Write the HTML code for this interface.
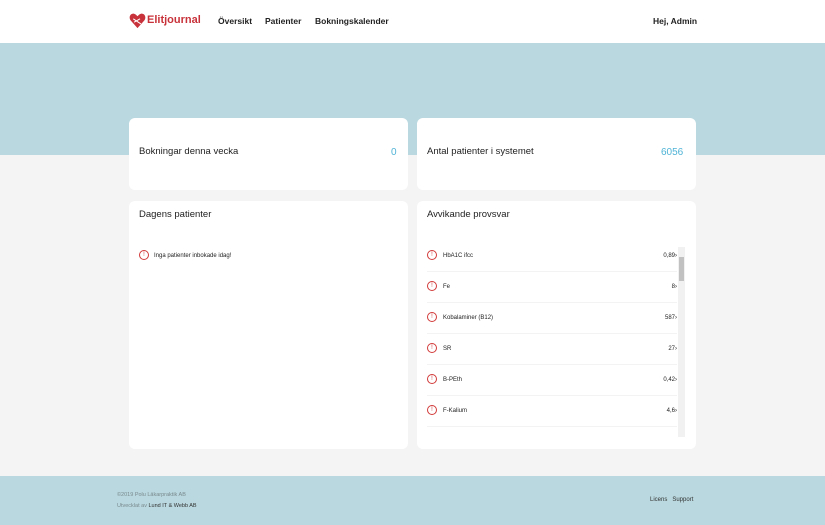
<!DOCTYPE html>
<html><head><style>
*{margin:0;padding:0;box-sizing:border-box}
body{width:825px;height:525px;overflow:hidden;background:#f4f4f4;font-family:"Liberation Sans",sans-serif;color:#222;position:relative}
.hdr{position:absolute;left:0;top:0;width:825px;height:43px;background:#fff}
.band{position:absolute;left:0;top:43px;width:825px;height:112px;background:#b9d8df}
.foot{position:absolute;left:0;top:476px;width:825px;height:49px;background:#b9d8df}
.card{position:absolute;background:#fff;border-radius:6px}
.t{position:absolute;font-size:10px}
.row{position:absolute;left:10px;width:250px;height:31px;border-bottom:1px solid #f3f3f3;font-size:6px}
.row span{top:12px}
.ic{position:absolute;left:0;top:9px;width:10px;height:10px;border:1px solid #d23a3a;border-radius:50%;color:#d23a3a;font-size:6px;text-align:center;line-height:8px}
</style></head><body>
<div class="hdr">
<svg style="position:absolute;left:129px;top:12px" width="17" height="17" viewBox="0 0 20 20"><path d="M10 19 L2 10 C-1 6 2 1 6 2 C8 2.5 9 4 10 5 C11 4 12 2.5 14 2 C18 1 21 6 18 10 Z" fill="#c8323a"/><path d="M5 8 L14 14 M6 12 L13 8" stroke="#fff" stroke-width="1.3"/></svg>
<div class="t" style="left:147px;top:14px;font-size:11px;font-weight:bold;color:#c8323a">Elitjournal</div>
<div class="t" style="left:218px;top:16px;font-size:8.5px;font-weight:bold">Översikt</div>
<div class="t" style="left:265px;top:16px;font-size:8.5px;font-weight:bold">Patienter</div>
<div class="t" style="left:315px;top:16px;font-size:8.5px;font-weight:bold">Bokningskalender</div>
<div class="t" style="left:653px;top:16px;font-size:8.5px;font-weight:bold">Hej, Admin</div>
</div>
<div class="band"></div>
<div class="card" style="left:129px;top:118px;width:279px;height:72px">
<div class="t" style="left:10px;top:28px;font-size:9.5px">Bokningar denna vecka</div>
<div class="t" style="left:262px;top:29px;color:#4fb3d6">0</div></div>
<div class="card" style="left:417px;top:118px;width:279px;height:72px">
<div class="t" style="left:10px;top:28px;font-size:9.5px">Antal patienter i systemet</div>
<div class="t" style="left:244px;top:29px;color:#4fb3d6">6056</div></div>
<div class="card" style="left:129px;top:201px;width:279px;height:248px">
<div class="t" style="left:10px;top:8px;font-size:9.5px">Dagens patienter</div>
<div class="row" style="top:40px;border:none"><div class="ic">!</div><span style="position:absolute;left:15px">Inga patienter inbokade idag!</span></div>
</div>
<div class="card" style="left:417px;top:201px;width:279px;height:248px">
<div class="t" style="left:10px;top:8px;font-size:9.5px">Avvikande provsvar</div>
<div class="row" style="top:40px"><div class="ic">!</div><span style="position:absolute;left:16px">HbA1C ifcc</span><span style="position:absolute;right:0">0,89›</span></div>
<div class="row" style="top:71px"><div class="ic">!</div><span style="position:absolute;left:16px">Fe</span><span style="position:absolute;right:0">8›</span></div>
<div class="row" style="top:102px"><div class="ic">!</div><span style="position:absolute;left:16px">Kobalaminer (B12)</span><span style="position:absolute;right:0">587›</span></div>
<div class="row" style="top:133px"><div class="ic">!</div><span style="position:absolute;left:16px">SR</span><span style="position:absolute;right:0">27›</span></div>
<div class="row" style="top:164px"><div class="ic">!</div><span style="position:absolute;left:16px">B-PEth</span><span style="position:absolute;right:0">0,42›</span></div>
<div class="row" style="top:195px"><div class="ic">!</div><span style="position:absolute;left:16px">F-Kalium</span><span style="position:absolute;right:0">4,6›</span></div>
<div style="position:absolute;left:261px;top:46px;width:7px;height:190px;background:#f1f1f1"></div>
<div style="position:absolute;left:262px;top:56px;width:5px;height:24px;background:#c1c1c1"></div>
</div>
<div class="foot">
<div class="t" style="left:117px;top:16px;font-size:5.5px;color:#7a8a8f">©2019 Polu Läkarpraktik AB</div>
<div class="t" style="left:117px;top:27px;font-size:5.5px;color:#7a8a8f">Utvecklat av <span style="color:#333">Lund IT &amp; Webb AB</span></div>
<div class="t" style="left:650px;top:21px;font-size:6px;color:#333">Licens &nbsp; Support</div>
</div>
</body></html>
